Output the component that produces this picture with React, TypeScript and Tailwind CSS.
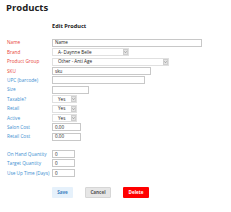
import React from "react";

const F = { fontFamily: '"Open Sans", "Liberation Sans", sans-serif' };

function Label({ text, req }: { text: string; req?: boolean }) {
  return (
    <div className={`w-[45px] shrink-0 text-[4.7px] leading-none whitespace-nowrap ${req ? "text-[#e8443a]" : "text-[#3d8fd1]"}`}>
      {text}
    </div>
  );
}

function Input({ w, value }: { w: string; value?: string }) {
  return (
    <div className={`${w} h-[8px] border border-[#c8c8c8] bg-white flex items-center px-[2px] text-[4.6px] leading-none text-[#222]`}>
      {value}
    </div>
  );
}

function Select({ w, value, indent }: { w: string; value: string; indent?: boolean }) {
  return (
    <div className={`${w} h-[8px] border border-[#e0e0e0] bg-white flex items-center justify-between text-[4.6px] leading-none text-[#222]`}>
      <span className={indent ? "pl-[5px]" : "pl-[3px]"}>{value}</span>
      <span className="w-[5px] h-[6px] mr-[0.5px] bg-[#e4e4e4] border border-[#cfcfcf] flex items-center justify-center">
        <svg width="3" height="2" viewBox="0 0 6 4">
          <path d="M0.5 0.5 L3 3.5 L5.5 0.5" fill="none" stroke="#777" strokeWidth="1" />
        </svg>
      </span>
    </div>
  );
}

function Row({ children, label, req }: { children: React.ReactNode; label: string; req?: boolean }) {
  return (
    <div className="flex items-center h-[9.4px]">
      <Label text={label} req={req} />
      {children}
    </div>
  );
}

export default function App() {
  return (
    <div className="w-[231px] h-[212px] bg-white relative overflow-hidden" style={F}>
      <div className="pl-[6px] pt-[3px] text-[9.5px] font-bold leading-none text-[#222]">Products</div>
      <div className="pl-[52px] pt-[11px] text-[5.6px] font-bold leading-none text-[#222]">Edit Product</div>
      <div className="pl-[7px] pt-[9px] flex flex-col">
        <Row label="Name" req><Input w="w-[150px]" value="Name" /></Row>
        <Row label="Brand" req><Select w="w-[77px]" value="A- Daynne Belle" indent /></Row>
        <Row label="Product Group" req><Select w="w-[117px]" value="Other - Anti Age" indent /></Row>
        <Row label="SKU" req><Input w="w-[99px]" value="sku" /></Row>
        <Row label="UPC (barcode)"><Input w="w-[93px]" /></Row>
        <Row label="Size"><Input w="w-[37px]" /></Row>
        <Row label="Taxable?"><Select w="w-[25px]" value="Yes" indent /></Row>
        <Row label="Retail"><Select w="w-[25px]" value="Yes" indent /></Row>
        <Row label="Active"><Select w="w-[25px]" value="Yes" indent /></Row>
        <Row label="Salon Cost"><Input w="w-[29px]" value="0.00" /></Row>
        <Row label="Retail Cost"><Input w="w-[29px]" value="0.00" /></Row>
        <div className="h-[8px]" />
        <Row label="On Hand Quantity"><Input w="w-[23px]" value="0" /></Row>
        <Row label="Target Quantity"><Input w="w-[23px]" value="0" /></Row>
        <Row label="Use Up Time (Days)"><Input w="w-[23px]" value="0" /></Row>
        <div className="flex items-center pl-[45px] pt-[9.5px] gap-[12px] text-[4.6px] font-bold leading-none">
          <div className="w-[21px] h-[11px] rounded-[1px] bg-[#e6f1fb] text-[#3d7fc0] flex items-center justify-center">Save</div>
          <div className="w-[26px] h-[11px] rounded-[1px] bg-[#e6e6e6] border border-[#d6d6d6] text-[#555] flex items-center justify-center">Cancel</div>
          <div className="w-[26px] h-[11px] rounded-[1px] bg-[#ff0000] text-white flex items-center justify-center">Delete</div>
        </div>
      </div>
    </div>
  );
}
